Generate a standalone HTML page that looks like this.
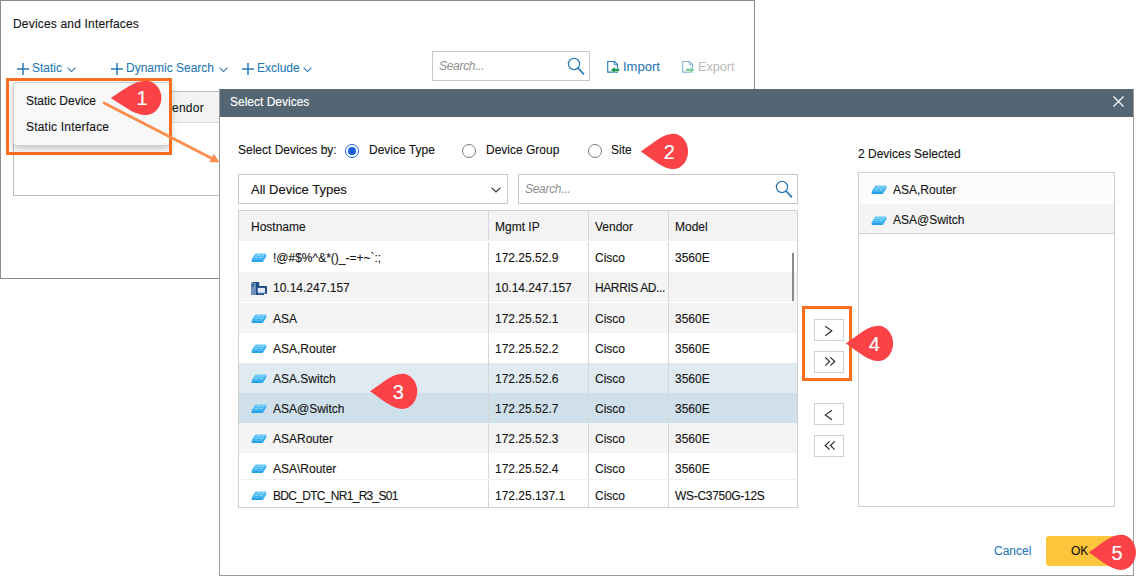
<!DOCTYPE html>
<html>
<head>
<meta charset="utf-8">
<title>Select Devices</title>
<style>
*{box-sizing:border-box;margin:0;padding:0}
html,body{width:1137px;height:576px;overflow:hidden;background:#fff}
body{position:relative;font-family:"Liberation Sans",sans-serif;font-size:12px;color:#151515;-webkit-text-stroke:.12px}
.abs{position:absolute}
.t{position:absolute;white-space:nowrap;line-height:16px}
.blue{color:#2578b5;-webkit-text-stroke:.08px}
/* back panel */
#back{left:0;top:0;width:755px;height:279px;border:1px solid #8e8a8a;background:#fff}
#srch1{left:432px;top:51px;width:158px;height:30px;border:1px solid #c8c8c8;background:#fff}
.ph{font-style:italic;color:#8e8e8e;-webkit-text-stroke:0;font-size:12px;letter-spacing:-.3px}
#btable{left:13px;top:91px;width:730px;height:105px;border:1px solid #bdbdbd;background:#fff}
#bthead{left:0;top:0;width:100%;height:31px;background:#f3f3f3;border-bottom:1px solid #ddd}
/* dropdown menu */
#menu{left:13px;top:82px;width:157px;height:64px;background:#f8f8f8;border:1px solid #cdcdcd;border-radius:3px;box-shadow:0 3px 8px rgba(0,0,0,.24)}
#obox1{left:6px;top:78px;width:166px;height:77px;border:3px solid #f96d21}
/* dialog */
#dlg{left:219px;top:89px;width:915px;height:487px;background:#fff;border:1px solid #9c9c9c;border-right-width:1.5px;border-bottom-width:1.5px}
#dhead{left:0;top:-1px;width:913px;height:28px;background:#546673}
.radio{width:14px;height:14px;border-radius:50%;border:1px solid #7a7a7a;background:#fff}
.radio.on{border:1.3px solid #1a62e0}
.radio.on::after{content:"";position:absolute;left:1.7px;top:1.7px;width:8px;height:8px;border-radius:50%;background:#1a62e0}
#sel{left:238px;top:174px;width:270px;height:30px;border:1px solid #c8c8c8;background:#fff}
#srch2{left:518px;top:174px;width:280px;height:30px;border:1px solid #c8c8c8;background:#fff}
#tbl{left:238px;top:210px;width:560px;height:298px;border:1px solid #d0d0d0;background:#fff;overflow:hidden}
.row{position:absolute;left:0;width:558px;height:30px}
.row .c{position:absolute;top:0;height:100%;border-left:1px solid #d8d8d8}
.row .t{top:8px}
.hd{background:#f3f3f3}
.hd .c{height:29px!important}
.r1 .t{top:9px}
.r1 .ico{top:12px}
.r1 .c{top:1px!important}
.alt{background:#f4f4f4}
.s1{background:#dfeaf1}
.s2{background:#cfe0ea}
.ico{position:absolute;left:12px;top:11px;width:16px;height:10px}
#rlist .ico{top:12px}
.mvbtn{width:30px;height:22px;border:1px solid #d0d0d0;background:#fff}
#obox4{left:802px;top:306px;width:50px;height:75px;border:3px solid #f96d21}
#rlist{left:858px;top:172px;width:257px;height:335px;border:1px solid #d0d0d0;background:#fff}
#ok{left:1046px;top:536px;width:70px;height:30px;background:#fdc53b;border-radius:3px}
.badge{position:absolute}
.bn{font-family:"Liberation Sans",sans-serif;font-size:20px}
</style>
</head>
<body>

<!-- BACK PANEL -->
<div id="back" class="abs"></div>
<div class="t" style="left:13px;top:16px;letter-spacing:.18px">Devices and Interfaces</div>


<!-- toolbar -->
<svg class="abs" style="left:17px;top:63px" width="12" height="12" viewBox="0 0 12 12"><path d="M6 0v12M0 6h12" stroke="#2a7ab5" stroke-width="1.5" fill="none"/></svg>
<div class="t blue" style="left:32px;top:60px">Static</div>
<svg class="abs" style="left:67px;top:67px" width="9" height="5.4" viewBox="0 0 8 5"><path d="M0.4 0.5L4 4.3L7.6 0.5" stroke="#2a7ab5" stroke-width="0.95" fill="none"/></svg>

<svg class="abs" style="left:111px;top:63px" width="12" height="12" viewBox="0 0 12 12"><path d="M6 0v12M0 6h12" stroke="#2a7ab5" stroke-width="1.5" fill="none"/></svg>
<div class="t blue" style="left:126px;top:60px">Dynamic Search</div>
<svg class="abs" style="left:219px;top:67px" width="9" height="5.4" viewBox="0 0 8 5"><path d="M0.4 0.5L4 4.3L7.6 0.5" stroke="#2a7ab5" stroke-width="0.95" fill="none"/></svg>

<svg class="abs" style="left:242px;top:63px" width="12" height="12" viewBox="0 0 12 12"><path d="M6 0v12M0 6h12" stroke="#2a7ab5" stroke-width="1.5" fill="none"/></svg>
<div class="t blue" style="left:257px;top:60px">Exclude</div>
<svg class="abs" style="left:303px;top:67px" width="9" height="5.4" viewBox="0 0 8 5"><path d="M0.4 0.5L4 4.3L7.6 0.5" stroke="#2a7ab5" stroke-width="0.95" fill="none"/></svg>


<div id="srch1" class="abs"></div>
<div class="t ph" style="left:439px;top:58px">Search...</div>


<svg class="abs" style="left:567px;top:57px" width="18" height="18" viewBox="0 0 18 18"><circle cx="7" cy="7" r="5.6" stroke="#2a7ab5" stroke-width="1.3" fill="none"/><path d="M11 11L16.5 16.8" stroke="#2a7ab5" stroke-width="1.8" stroke-linecap="round"/></svg>
<!-- import -->
<svg class="abs" style="left:606px;top:60px" width="15" height="15" viewBox="0 0 15 15"><path d="M1.7 1.5H8.5L11.5 4.5V12.1H1.7Z" fill="#fff" stroke="#2a7ab5" stroke-width="1.1"/><path d="M8.3 1.5V4.7H11.5" fill="none" stroke="#2a7ab5" stroke-width="0.9"/><path d="M5 10L8.7 7V8.8H13.2V11.3H8.7V13Z" fill="#1c9650" stroke="#fff" stroke-width="0.9" paint-order="stroke"/></svg>
<div class="t blue" style="left:623px;top:59px;font-size:13px">Import</div>
<!-- export -->
<svg class="abs" style="left:681px;top:60px" width="15" height="15" viewBox="0 0 15 15"><path d="M1.7 1.5H8.5L11.5 4.5V12.1H1.7Z" fill="#fff" stroke="#7db3d8" stroke-width="1.1"/><path d="M8.3 1.5V4.7H11.5" fill="none" stroke="#7db3d8" stroke-width="0.9"/><path d="M13.4 10L9.7 7V8.8H5V11.3H9.7V13Z" fill="#7fcaa0" stroke="#fff" stroke-width="0.9" paint-order="stroke"/></svg>
<div class="t" style="left:698px;top:59px;color:#b9b9b9;font-size:12.6px;-webkit-text-stroke:0">Export</div>

<div id="btable" class="abs"><div id="bthead" class="abs"></div></div>
<div class="t" style="left:172px;top:100px;letter-spacing:.25px">endor</div>

<!-- DIALOG -->
<div id="dlg" class="abs"><div id="dhead" class="abs"></div></div>
<div class="t" style="left:230px;top:94px;color:#fff">Select Devices</div>


<!-- icon defs -->
<svg width="0" height="0" style="position:absolute">
<defs>
<linearGradient id="swg" x1="0" y1="0" x2="0" y2="1"><stop offset="0" stop-color="#66caf8"/><stop offset="1" stop-color="#33b0f1"/></linearGradient>
<g id="sw"><path d="M4.5 0.5H15.2L11.8 6.3H0.7Z" fill="url(#swg)"/><path d="M0.7 6.3H11.8V9H0.7Z" fill="#21a2ea"/><path d="M11.8 6.3L15.2 0.5V3.5L11.8 9Z" fill="#2aa9ec"/><path d="M6.2 2.2h3.2M10.6 2.2h2.4M3.8 4.4h3M8.6 4.4h2.6" stroke="#a9e0fa" stroke-width="0.9" fill="none"/></g>
<g id="pc"><path d="M3 1H9.2V14H5.4V2H1Z" fill="#1f4c82"/><rect x="1" y="2" width="4.4" height="12" fill="#6c90bf"/><rect x="1.7" y="3" width="2.2" height="2.6" fill="#3d6191"/><rect x="7" y="5" width="10" height="7.8" rx="0.6" fill="#1f4c82"/><rect x="7.7" y="6.9" width="7.3" height="4.9" fill="#dfe9f5"/><rect x="9.4" y="12.8" width="4.6" height="1.2" fill="#1f4c82"/></g>
</defs>
</svg>

<div class="t" style="left:238px;top:142px">Select Devices by:</div>
<div class="abs radio on" style="left:345px;top:144px"></div><div class="t" style="left:369px;top:142px">Device Type</div>
<div class="abs radio" style="left:462px;top:144px"></div><div class="t" style="left:486px;top:142px">Device Group</div>
<div class="abs radio" style="left:588px;top:144px"></div><div class="t" style="left:611px;top:142px">Site</div>
<div id="sel" class="abs"></div><div class="t" style="left:251px;top:182px;font-size:13px">All Device Types</div>
<svg class="abs" style="left:491px;top:187px" width="10" height="6" viewBox="0 0 10 6"><path d="M0.6 0.6L5 5L9.4 0.6" stroke="#333" stroke-width="1.2" fill="none"/></svg>
<div id="srch2" class="abs"></div><div class="t ph" style="left:525px;top:181px">Search...</div>
<svg class="abs" style="left:775px;top:180px" width="18" height="18" viewBox="0 0 18 18"><circle cx="7" cy="7" r="5.6" stroke="#2a7ab5" stroke-width="1.3" fill="none"/><path d="M11 11L16.5 16.8" stroke="#2a7ab5" stroke-width="1.8" stroke-linecap="round"/></svg>
<div id="tbl" class="abs">
<div class="row hd" style="top:0;height:30px"><div class="t" style="left:12px">Hostname</div><div class="c" style="left:249px"></div><div class="t" style="left:256px">Mgmt IP</div><div class="c" style="left:349px"></div><div class="t" style="left:356px">Vendor</div><div class="c" style="left:429px"></div><div class="t" style="left:436px">Model</div><div class="c" style="left:558px"></div></div>
<div class="row r1" style="top:30px;height:31px"><svg class="ico" viewBox="0 0 16 10"><use href="#sw"/></svg><div class="t" style="left:34px">!@#$%^&amp;*()_-=+~`:;</div><div class="c" style="left:249px"></div><div class="t" style="left:256px">172.25.52.9</div><div class="c" style="left:349px"></div><div class="t" style="left:356px">Cisco</div><div class="c" style="left:429px"></div><div class="t" style="left:436px">3560E</div></div>
<div class="row alt" style="top:61px;height:30px"><svg class="ico" style="left:11px;top:9px;width:18px;height:15px" viewBox="0 0 18 15"><use href="#pc"/></svg><div class="t" style="left:34px">10.14.247.157</div><div class="c" style="left:249px"></div><div class="t" style="left:256px">10.14.247.157</div><div class="c" style="left:349px"></div><div class="t" style="left:356px;letter-spacing:-.4px">HARRIS AD...</div><div class="c" style="left:429px"></div><div class="t" style="left:436px"></div></div>
<div class="row alt" style="top:92px;height:30px"><svg class="ico" viewBox="0 0 16 10"><use href="#sw"/></svg><div class="t" style="left:34px">ASA</div><div class="c" style="left:249px"></div><div class="t" style="left:256px">172.25.52.1</div><div class="c" style="left:349px"></div><div class="t" style="left:356px">Cisco</div><div class="c" style="left:429px"></div><div class="t" style="left:436px">3560E</div></div>
<div class="row " style="top:122px;height:30px"><svg class="ico" viewBox="0 0 16 10"><use href="#sw"/></svg><div class="t" style="left:34px">ASA,Router</div><div class="c" style="left:249px"></div><div class="t" style="left:256px">172.25.52.2</div><div class="c" style="left:349px"></div><div class="t" style="left:356px">Cisco</div><div class="c" style="left:429px"></div><div class="t" style="left:436px">3560E</div></div>
<div class="row s1" style="top:152px;height:30px"><svg class="ico" viewBox="0 0 16 10"><use href="#sw"/></svg><div class="t" style="left:34px">ASA.Switch</div><div class="c" style="left:249px"></div><div class="t" style="left:256px">172.25.52.6</div><div class="c" style="left:349px"></div><div class="t" style="left:356px">Cisco</div><div class="c" style="left:429px"></div><div class="t" style="left:436px">3560E</div></div>
<div class="row s2" style="top:182px;height:30px"><svg class="ico" viewBox="0 0 16 10"><use href="#sw"/></svg><div class="t" style="left:34px">ASA@Switch</div><div class="c" style="left:249px"></div><div class="t" style="left:256px">172.25.52.7</div><div class="c" style="left:349px"></div><div class="t" style="left:356px">Cisco</div><div class="c" style="left:429px"></div><div class="t" style="left:436px">3560E</div></div>
<div class="row alt" style="top:212px;height:30px"><svg class="ico" viewBox="0 0 16 10"><use href="#sw"/></svg><div class="t" style="left:34px">ASARouter</div><div class="c" style="left:249px"></div><div class="t" style="left:256px">172.25.52.3</div><div class="c" style="left:349px"></div><div class="t" style="left:356px">Cisco</div><div class="c" style="left:429px"></div><div class="t" style="left:436px">3560E</div></div>
<div class="row " style="top:242px;height:27px;border-bottom:1px solid #f0f0f0"><svg class="ico" viewBox="0 0 16 10"><use href="#sw"/></svg><div class="t" style="left:34px">ASA\Router</div><div class="c" style="left:249px"></div><div class="t" style="left:256px">172.25.52.4</div><div class="c" style="left:349px"></div><div class="t" style="left:356px">Cisco</div><div class="c" style="left:429px"></div><div class="t" style="left:436px">3560E</div></div>
<div class="row " style="top:269px;height:28px"><svg class="ico" viewBox="0 0 16 10"><use href="#sw"/></svg><div class="t" style="left:34px;letter-spacing:-.7px">BDC_DTC_NR1_R3_S01</div><div class="c" style="left:249px"></div><div class="t" style="left:256px">172.25.137.1</div><div class="c" style="left:349px"></div><div class="t" style="left:356px">Cisco</div><div class="c" style="left:429px"></div><div class="t" style="left:436px;letter-spacing:-.3px">WS-C3750G-12S</div></div>
<div class="abs" style="left:553px;top:42px;width:2px;height:48px;background:#8a8a8a"></div>
</div>
<div class="abs mvbtn" style="left:814px;top:319px"><svg class="abs" style="left:-1px;top:-1px" width="30" height="22" viewBox="0 0 30 22"><path d="M11.2 7.2L17.8 11.9L11.2 16.7" stroke="#262626" stroke-width="1.15" fill="none"/></svg></div>
<div class="abs mvbtn" style="left:814px;top:351px"><svg class="abs" style="left:-1px;top:-1px" width="30" height="22" viewBox="0 0 30 22"><path d="M11.2 6.3L15.6 10.5L11.2 14.7M16.4 6.3L20.8 10.5L16.4 14.7" stroke="#262626" stroke-width="1.15" fill="none"/></svg></div>
<div class="abs mvbtn" style="left:814px;top:403px"><svg class="abs" style="left:-1px;top:-1px" width="30" height="22" viewBox="0 0 30 22"><path d="M18 7.2L11.3 11.9L18 16.7" stroke="#262626" stroke-width="1.15" fill="none"/></svg></div>
<div class="abs mvbtn" style="left:814px;top:435px"><svg class="abs" style="left:-1px;top:-1px" width="30" height="22" viewBox="0 0 30 22"><path d="M15.6 6.3L11.2 10.5L15.6 14.7M20.8 6.3L16.4 10.5L20.8 14.7" stroke="#262626" stroke-width="1.15" fill="none"/></svg></div>
<div id="obox4" class="abs"></div>
<div class="t" style="left:858px;top:146px">2 Devices Selected</div>
<div id="rlist" class="abs"><div class="row" style="top:0;width:255px;height:31px;background:#fcfcfc"><svg class="ico" viewBox="0 0 16 10"><use href="#sw"/></svg><div class="t" style="left:34px;top:9px">ASA,Router</div></div><div class="row alt" style="top:31px;width:255px;height:30px;border-bottom:1px solid #d0d0d0"><svg class="ico" viewBox="0 0 16 10"><use href="#sw"/></svg><div class="t" style="left:34px">ASA@Switch</div></div></div>
<div class="t blue" style="left:994px;top:543px">Cancel</div>
<div id="ok" class="abs"></div><div class="t" style="left:1071px;top:543px;color:#111">OK</div>
<svg class="abs" style="left:1112.6px;top:96.4px" width="11" height="11" viewBox="0 0 11 11"><path d="M0.5 0.5L10.5 10.5M10.5 0.5L0.5 10.5" stroke="#fff" stroke-width="1.2"/></svg>
<div id="menu" class="abs"></div><div class="t" style="left:26px;top:93px">Static Device</div><div class="t" style="left:26px;top:119px;letter-spacing:.2px">Static Interface</div>
<div id="obox1" class="abs"></div>
<svg class="abs" style="left:0;top:0" width="1137" height="576"><path d="M104 103L212 158.5" stroke="#fb8d4d" stroke-width="2.8" stroke-linecap="round"/><path d="M219.5 162.3L209.3 162.3L213.8 153.8Z" fill="#fb8d4d"/></svg>
<svg class="abs badge" style="left:109px;top:79px" width="56" height="40" viewBox="0 0 56 40"><path d="M1.8 18.9C15.72 10.48 25.33 1.85 36.56 1.85C45.3 1.85 52.4 9.49 52.4 18.9C52.4 28.31 45.3 35.95 36.56 35.95C25.33 35.95 15.72 27.32 1.8 18.9Z" fill="#fa4247"/><text x="33.1" y="25.5" class="bn" fill="#fff" stroke="#fff" stroke-width="0.15" text-anchor="middle">1</text></svg>
<svg class="abs badge" style="left:639px;top:132px" width="56" height="40" viewBox="0 0 56 40"><path d="M1.9 19.4C14.88 10.73 23.85 1.85 34.33 1.85C42.48 1.85 49.1 9.71 49.1 19.4C49.1 29.09 42.48 36.95 34.33 36.95C23.85 36.95 14.88 28.07 1.9 19.4Z" fill="#fa4247"/><text x="30.3" y="27.2" class="bn" fill="#fff" stroke="#fff" stroke-width="0.15" text-anchor="middle">2</text></svg>
<svg class="abs badge" style="left:369px;top:372px" width="56" height="40" viewBox="0 0 56 40"><path d="M1.0 19.3C14.01 10.61 22.99 1.7 33.5 1.7C41.67 1.7 48.3 9.58 48.3 19.3C48.3 29.02 41.67 36.9 33.5 36.9C22.99 36.9 14.01 27.99 1.0 19.3Z" fill="#fa4247"/><text x="29.4" y="27.1" class="bn" fill="#fff" stroke="#fff" stroke-width="0.15" text-anchor="middle">3</text></svg>
<svg class="abs badge" style="left:844px;top:324px" width="56" height="40" viewBox="0 0 56 40"><path d="M1.9 19.4C14.88 10.73 23.85 1.85 34.33 1.85C42.48 1.85 49.1 9.71 49.1 19.4C49.1 29.09 42.48 36.95 34.33 36.95C23.85 36.95 14.88 28.07 1.9 19.4Z" fill="#fa4247"/><text x="30.3" y="27.2" class="bn" fill="#fff" stroke="#fff" stroke-width="0.15" text-anchor="middle">4</text></svg>
<svg class="abs badge" style="left:1087px;top:533px" width="56" height="40" viewBox="0 0 56 40"><path d="M1.7 19.3C14.71 10.58 23.69 1.65 34.2 1.65C42.37 1.65 49.0 9.56 49.0 19.3C49.0 29.04 42.37 36.95 34.2 36.95C23.69 36.95 14.71 28.02 1.7 19.3Z" fill="#fa4247"/><text x="30.1" y="27.1" class="bn" fill="#fff" stroke="#fff" stroke-width="0.15" text-anchor="middle">5</text></svg>
</body>
</html>
